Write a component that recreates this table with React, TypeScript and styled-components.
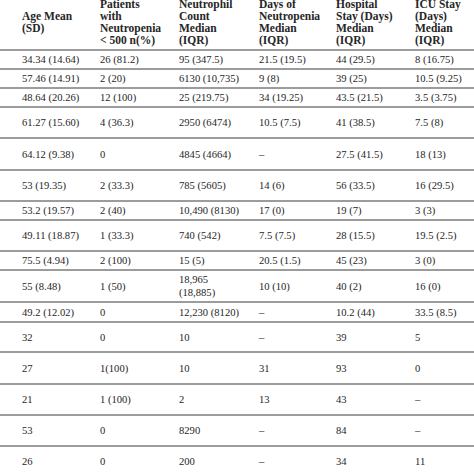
import React from "react";
import styled, { createGlobalStyle } from "styled-components";

const Global = createGlobalStyle`
  html, body {
    margin: 0;
    padding: 0;
    background: #ffffff;
  }
  body {
    width: 474px;
    height: 474px;
    overflow: hidden;
  }
`;

const Table = styled.div`
  width: 474px;
  margin-top: -2px;
  font-family: "Liberation Serif", "Times New Roman", serif;
  color: #262626;
`;

const Row = styled.div<{ $h: number }>`
  display: grid;
  grid-template-columns: 78px 79px 80px 77px 79px 1fr;
  padding-left: 22px;
  box-sizing: border-box;
  height: ${(p) => p.$h}px;
  border-bottom: 2px solid #9c9c9c;
  align-items: center;
`;

const HeaderRow = styled(Row)`
  padding-bottom: 3px;
  align-items: center;
`;

const HeadCell = styled.div`
  font-weight: bold;
  font-size: 11.5px;
  line-height: 12px;
  white-space: nowrap;
`;

const Cell = styled.div`
  font-size: 10.6px;
  line-height: 13px;
  white-space: nowrap;
`;

const headers: string[][] = [
  ["Age Mean", "(SD)"],
  ["Patients", "with", "Neutropenia", "< 500 n(%)"],
  ["Neutrophil", "Count", "Median", "(IQR)"],
  ["Days of", "Neutropenia", "Median", "(IQR)"],
  ["Hospital", "Stay (Days)", "Median", "(IQR)"],
  ["ICU Stay", "(Days)", "Median", "(IQR)"],
];

type R = { h: number; c: (string | string[])[] };

const rows: R[] = [
  { h: 19, c: ["34.34 (14.64)", "26 (81.2)", "95 (347.5)", "21.5 (19.5)", "44 (29.5)", "8 (16.75)"] },
  { h: 19, c: ["57.46 (14.91)", "2 (20)", "6130 (10,735)", "9 (8)", "39 (25)", "10.5 (9.25)"] },
  { h: 19, c: ["48.64 (20.26)", "12 (100)", "25 (219.75)", "34 (19.25)", "43.5 (21.5)", "3.5 (3.75)"] },
  { h: 31, c: ["61.27 (15.60)", "4 (36.3)", "2950 (6474)", "10.5 (7.5)", "41 (38.5)", "7.5 (8)"] },
  { h: 32, c: ["64.12 (9.38)", "0", "4845 (4664)", "–", "27.5 (41.5)", "18 (13)"] },
  { h: 31, c: ["53 (19.35)", "2 (33.3)", "785 (5605)", "14 (6)", "56 (33.5)", "16 (29.5)"] },
  { h: 19, c: ["53.2 (19.57)", "2 (40)", "10,490 (8130)", "17 (0)", "19 (7)", "3 (3)"] },
  { h: 31, c: ["49.11 (18.87)", "1 (33.3)", "740 (542)", "7.5 (7.5)", "28 (15.5)", "19.5 (2.5)"] },
  { h: 19, c: ["75.5 (4.94)", "2 (100)", "15 (5)", "20.5 (1.5)", "45 (23)", "3 (0)"] },
  { h: 32, c: ["55 (8.48)", "1 (50)", ["18,965", "(18,885)"], "10 (10)", "40 (2)", "16 (0)"] },
  { h: 20, c: ["49.2 (12.02)", "0", "12,230 (8120)", "–", "10.2 (44)", "33.5 (8.5)"] },
  { h: 30, c: ["32", "0", "10", "–", "39", "5"] },
  { h: 32, c: ["27", "1(100)", "10", "31", "93", "0"] },
  { h: 31, c: ["21", "1 (100)", "2", "13", "43", "–"] },
  { h: 31, c: ["53", "0", "8290", "–", "84", "–"] },
  { h: 31, c: ["26", "0", "200", "–", "34", "11"] },
];

export default function App() {
  return (
    <>
      <Global />
      <Table>
        <HeaderRow $h={53}>
          {headers.map((lines, i) => (
            <HeadCell key={i}>
              {lines.map((l, j) => (
                <div key={j}>{l}</div>
              ))}
            </HeadCell>
          ))}
        </HeaderRow>
        {rows.map((r, i) => (
          <Row key={i} $h={r.h}>
            {r.c.map((v, j) => (
              <Cell key={j}>
                {Array.isArray(v) ? v.map((l, k) => <div key={k}>{l}</div>) : v}
              </Cell>
            ))}
          </Row>
        ))}
      </Table>
    </>
  );
}
